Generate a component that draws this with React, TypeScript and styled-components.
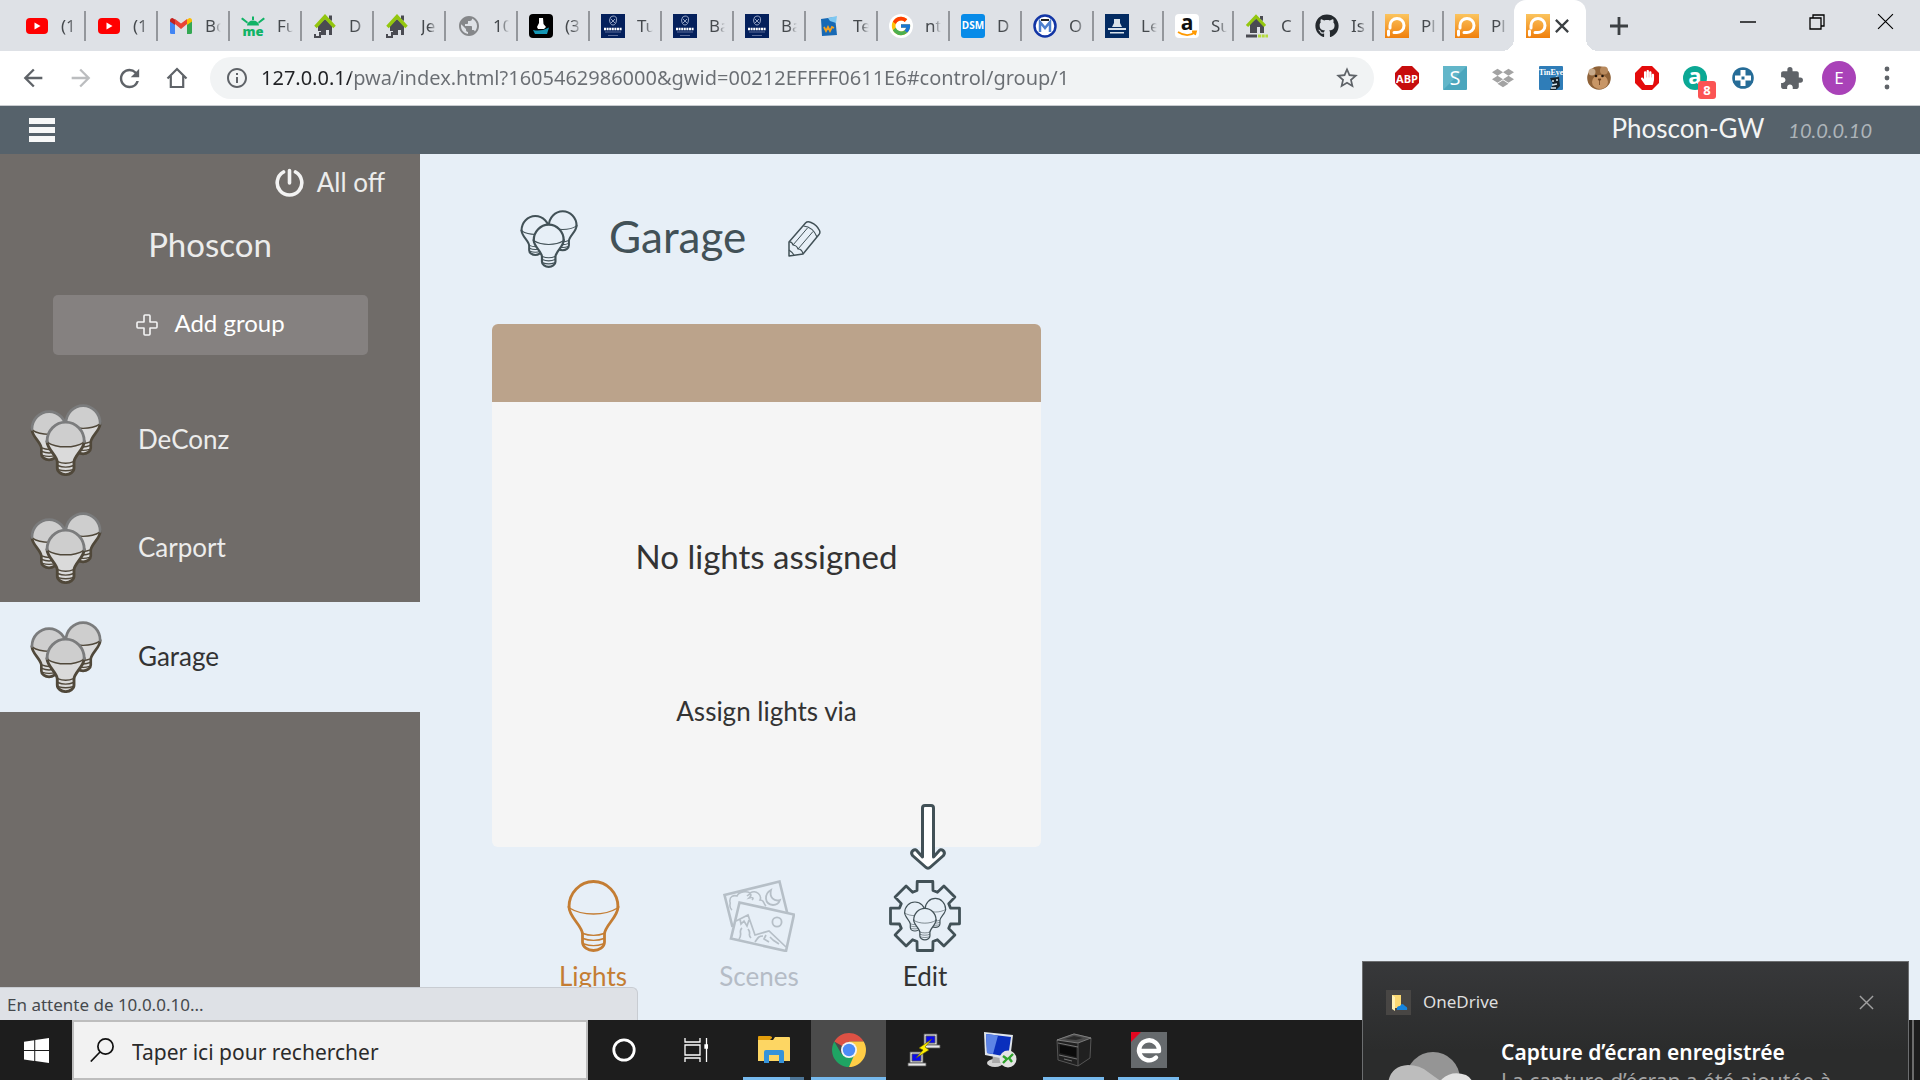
import React from "react";
import styled, { createGlobalStyle, css } from "styled-components";
import { FcGoogle } from "react-icons/fc";
import { FaGithub, FaDropbox, FaHandPaper } from "react-icons/fa";
import { MdExtension, MdStarBorder, MdInfoOutline, MdRefresh, MdArrowBack, MdArrowForward, MdPublic } from "react-icons/md";

const uiFont = `"Noto Sans", "Open Sans", sans-serif`;
const appFont = `Lato, "Open Sans", sans-serif`;

const color = {
  strip: "#dee1e6",
  chromeIcon: "#5f6368",
  header: "#56626b",
  sidebar: "#706c69",
  page: "#e7eff7",
  ink: "#425157",
  text: "#333333",
  orange: "#c47d33",
};

const GlobalStyle = createGlobalStyle`
  *, *::before, *::after { box-sizing: border-box; }
  body { margin: 0; overflow: hidden; }
  button { border: 0; padding: 0; margin: 0; background: none; color: inherit; font: inherit; cursor: pointer; }
  h1, h2, p, ul { margin: 0; padding: 0; font-weight: 400; }
  ul { list-style: none; }
  svg { display: block; flex: none; }
`;

const Screen = styled.div`
  position: relative;
  display: flex;
  flex-direction: column;
  height: 100vh;
  overflow: hidden;
  font-family: ${uiFont};
`;

/* ---------- browser tabs ---------- */

const TabStrip = styled.header`
  display: flex;
  height: 51px;
  padding-left: 14px;
  background: ${color.strip};
`;

const TabList = styled.div`
  display: flex;
`;

const Tab = styled.button<{ $narrow?: boolean }>`
  display: flex;
  align-items: center;
  gap: 12px;
  width: ${(p) => (p.$narrow ? 70 : 72)}px;
  height: 51px;
  padding-left: 11px;
  text-align: left;
  background: linear-gradient(#94979c, #94979c) right 11px / 2px 30px no-repeat;
  &:nth-last-child(2) { background: none; }
`;

const TabTitle = styled.span`
  width: 16px;
  overflow: hidden;
  white-space: nowrap;
  font-size: 17px;
  line-height: 24px;
  color: #45494d;
  mask-image: linear-gradient(to right, #000 50%, transparent);
`;

const ActiveTab = styled.div`
  position: relative;
  display: flex;
  align-items: center;
  gap: 5px;
  width: 72px;
  height: 51px;
  padding-left: 12px;
  background: #fff;
  border-radius: 12px 12px 0 0;
  &::before, &::after {
    content: "";
    position: absolute;
    bottom: 0;
    width: 12px;
    height: 12px;
  }
  &::before { right: 100%; background: radial-gradient(circle at 0 0, transparent 12px, #fff 12px); }
  &::after { left: 100%; background: radial-gradient(circle at 100% 0, transparent 12px, #fff 12px); }
`;

const TabAction = styled.button`
  display: grid;
  place-items: center;
  color: #3c4043;
`;

const NewTab = styled(TabAction)`
  width: 32px;
  margin-left: 17px;
`;

const WindowControls = styled.div`
  display: flex;
  align-items: flex-start;
  margin-left: auto;
`;

const WindowButton = styled.button`
  display: grid;
  place-items: center;
  width: 69px;
  height: 43px;
`;

/* ---------- browser toolbar ---------- */

const Toolbar = styled.div`
  display: flex;
  align-items: center;
  height: 55px;
  padding: 0 9px 0 9px;
  background: #fff;
  border-bottom: 1px solid #c9ccd0;
  color: ${color.chromeIcon};
`;

const ToolButton = styled.button<{ $faded?: boolean }>`
  position: relative;
  display: grid;
  place-items: center;
  width: 48px;
  height: 42px;
  opacity: ${(p) => (p.$faded ? 0.42 : 1)};
`;

const Omnibox = styled.label`
  display: flex;
  flex: 1;
  align-items: center;
  gap: 12px;
  height: 42px;
  margin: 0 9px;
  padding: 0 14px 0 15px;
  border-radius: 21px;
  background: #f1f3f4;
`;

/* The host part of the address is darker than the rest of it. */
const Address = styled.input`
  flex: 1;
  min-width: 0;
  border: 0;
  padding: 0;
  outline: 0;
  font: 20px/28px ${uiFont};
  color: #5f6368;
  background: linear-gradient(to right, #202124 90px, #6a6e73 90px);
  background-clip: text;
  -webkit-background-clip: text;
  -webkit-text-fill-color: transparent;
`;

const Badge = styled.span`
  position: absolute;
  right: 3px;
  bottom: 0;
  width: 18px;
  height: 18px;
  border-radius: 3px;
  background: #fb5454;
  color: #fff;
  font: 700 13px/18px ${uiFont};
  text-align: center;
`;

const Avatar = styled.span`
  width: 34px;
  height: 34px;
  border-radius: 50%;
  background: #a942b8;
  color: #fff;
  font: 17px/34px ${uiFont};
  text-align: center;
`;

/* ---------- gateway application ---------- */

const Gateway = styled.div`
  position: relative;
  display: flex;
  flex: 1;
  flex-direction: column;
  min-height: 0;
  overflow: hidden;
  font-family: ${appFont};
  background: ${color.page};
`;

const GatewayHeader = styled.header`
  display: flex;
  flex: none;
  align-items: center;
  justify-content: space-between;
  height: 48px;
  padding: 0 48px 0 29px;
  background: ${color.header};
`;

const MenuButton = styled.button`
  display: flex;
  flex-direction: column;
  gap: 3px;
  width: 26px;
  &::before, &::after, & > i {
    content: "";
    display: block;
    width: 100%;
    height: 6px;
    background: #f7f8f8;
  }
`;

const GatewayName = styled.div`
  display: flex;
  align-items: baseline;
  gap: 24px;
  padding-bottom: 2px;
  font-size: 26px;
  line-height: 32px;
  color: #f3f4f4;
`;

const GatewayAddress = styled.em`
  font-size: 20px;
  color: #adb4b9;
`;

const GatewayBody = styled.div`
  display: flex;
  flex: 1;
  min-height: 0;
`;

const Sidebar = styled.aside`
  flex: none;
  width: 420px;
  padding-top: 12px;
  background: ${color.sidebar};
  color: #ececec;
`;

const AllOff = styled.button`
  display: flex;
  align-items: center;
  gap: 13px;
  margin: 0 35px 0 auto;
  font-size: 26px;
  line-height: 32px;
`;

const SideTitle = styled.h2`
  margin: 26px 0 31px;
  font-size: 33px;
  line-height: 40px;
  text-align: center;
`;

const AddGroup = styled.button`
  display: flex;
  align-items: center;
  justify-content: center;
  gap: 16px;
  width: 315px;
  height: 60px;
  margin: 0 52px 31px 53px;
  border-radius: 5px;
  background: #858180;
  color: #fff;
  font-size: 24px;
  line-height: 32px;
  & > span { padding-bottom: 4px; }
`;

const GroupItem = styled.button<{ $active?: boolean }>`
  display: flex;
  align-items: center;
  gap: 36px;
  width: 100%;
  height: 108px;
  padding-left: 30px;
  font-size: 26px;
  line-height: 32px;
  & > span { padding-bottom: 3px; }
  ${(p) =>
    p.$active &&
    css`
      height: 110px;
      background: ${color.page};
      color: ${color.text};
    `}
`;

const Main = styled.main`
  flex: 1;
  min-width: 0;
  padding: 0 72px;
`;

const TitleRow = styled.div`
  display: flex;
  align-items: center;
  height: 170px;
  padding-left: 28px;
  color: ${color.ink};
`;

const GroupTitle = styled.h1`
  margin: 0 42px 0 31px;
  padding-bottom: 7px;
  font-size: 44px;
  line-height: 52px;
`;

const Column = styled.div`
  max-width: 549px;
`;

const Card = styled.section`
  overflow: hidden;
  border-radius: 6px;
  background: #f5f5f5;
  color: ${color.text};
  text-align: center;
`;

const CardHeader = styled.div`
  height: 78px;
  background: #bba38b;
`;

const CardBody = styled.div`
  display: flex;
  flex-direction: column;
  gap: 119px;
  padding: 134px 0 120px;
`;

const EmptyTitle = styled.p`
  font-size: 33px;
  line-height: 40px;
`;

const EmptyHint = styled.p`
  font-size: 26px;
  line-height: 32px;
`;

const ViewNav = styled.nav`
  display: grid;
  grid-template-columns: repeat(3, 166px);
  margin: 33px 0 0 18px;
`;

const ViewButton = styled.button<{ $tone: string }>`
  position: relative;
  display: flex;
  flex-direction: column;
  align-items: center;
  gap: 8px;
  font-size: 26px;
  line-height: 32px;
  color: ${(p) => p.$tone};
`;

const Pointer = styled.span`
  position: absolute;
  bottom: calc(100% + 10px);
  left: 50%;
  margin-left: -15px;
`;

const StatusBubble = styled.div`
  position: absolute;
  left: 0;
  bottom: 0;
  width: 638px;
  height: 33px;
  padding-left: 7px;
  border: solid #c8ccd2;
  border-width: 1px 1px 0 0;
  border-top-right-radius: 6px;
  background: ${color.strip};
  color: #45494d;
  font: 17px/34px ${uiFont};
`;

/* ---------- taskbar ---------- */

const Taskbar = styled.footer`
  display: flex;
  flex: none;
  height: 60px;
  background: #1d1d1d;
  color: #fff;
`;

const StartButton = styled.button`
  display: grid;
  place-items: center;
  width: 72px;
`;

const SearchBox = styled.label`
  display: flex;
  align-items: center;
  gap: 18px;
  width: 516px;
  padding-left: 16px;
  border: 2px solid #bdbdbd;
  background: #f2f2f2;
  color: #1a1a1a;
`;

const SearchInput = styled.input`
  flex: 1;
  min-width: 0;
  border: 0;
  padding: 4px 0 0;
  outline: 0;
  background: none;
  font: 21px/28px ${uiFont};
  &::placeholder { color: #2b2b2b; opacity: 1; }
`;

const SystemButton = styled.button`
  display: grid;
  place-items: center;
  width: 72px;
`;

const TaskButtons = styled.div`
  display: flex;
  padding-left: 4px;
`;

const TaskButton = styled.button<{ $state?: "open" | "active" | "stack" }>`
  position: relative;
  display: grid;
  place-items: center;
  width: 75px;
  background: ${(p) => (p.$state === "active" ? "#4b4b4b" : "none")};
  &::after {
    content: "";
    position: absolute;
    right: ${(p) => (p.$state === "active" ? 0 : 7)}px;
    bottom: 0;
    left: ${(p) => (p.$state === "active" ? 0 : 7)}px;
    height: 3px;
    background: ${(p) =>
      p.$state === "stack"
        ? "linear-gradient(to right, #76b9ed 47px, #4d7596 47px)"
        : p.$state
        ? "#76b9ed"
        : "none"};
  }
`;

const ShowDesktop = styled.button`
  width: 8px;
  margin-left: auto;
  border-left: 2px solid #6b6b6b;
`;

/* ---------- notification ---------- */

const Toast = styled.aside`
  position: absolute;
  right: 11px;
  bottom: 0;
  width: 547px;
  height: 119px;
  overflow: hidden;
  border: 1px solid #6c6e70;
  border-width: 1px 1px 0;
  background: linear-gradient(#37383a, #2b2c2c 75%);
  color: #fff;
`;

const ToastHead = styled.div`
  display: flex;
  align-items: center;
  gap: 12px;
  padding: 28px 34px 0 23px;
  font-size: 17px;
  line-height: 22px;
  color: #dedede;
`;

const ToastApp = styled.span`
  padding-bottom: 2px;
`;

const ToastClose = styled.button`
  margin-left: auto;
  color: #a0a0a0;
`;

const ToastBody = styled.div`
  display: flex;
  gap: 25px;
  padding: 37px 0 0 25px;
`;

const ToastTitle = styled.p`
  font-size: 21px;
  font-weight: 600;
  line-height: 30px;
`;

const ToastText = styled.p`
  font-size: 21px;
  line-height: 28px;
  color: #a3a3a3;
`;

const ToastCopy = styled.div`
  margin-top: -15px;
`;

/* ---------- drawings ---------- */

type BulbProps = { w: number; filled?: boolean; fill?: string };

function Bulb({ w, filled, fill = "none" }: BulbProps) {
  const dome = filled ? "#7b7c7d" : "currentColor";
  const base = filled ? "#50483a" : "currentColor";
  return (
    <g fill="none" strokeLinecap="round" strokeLinejoin="round">
      <path
        d="M2 27C2 37 15.5 46 15.5 54V62C15.5 67 21 70.5 26.5 70.5S37.5 67 37.5 62V54C37.5 46 51 37 51 27Z"
        fill={filled ? "#dadada" : fill}
      />
      <path d="M2 27A24.5 25 0 0 1 51 27C38 36 15 36 2 27Z" fill={filled ? "#cecece" : fill} />
      <path
        d="M2 27C2 37 15.5 46 15.5 54V62C15.5 67 21 70.5 26.5 70.5S37.5 67 37.5 62V54C37.5 46 51 37 51 27"
        stroke={base}
        strokeWidth={w}
      />
      <path
        d="M2.5 28C15 36 38 36 50.5 28M16 53.5C22 56 31 56 37 53.5M16 58.5C22 61 31 61 37 58.5M17 64C23 66 30 66 36 64"
        stroke={base}
        strokeWidth={w * 0.5}
      />
      <path d="M2 27A24.5 25.5 0 0 1 51 27" stroke={dome} strokeWidth={w} />
    </g>
  );
}

function BulbTrio({ w, filled, fill }: BulbProps) {
  return (
    <>
      <g transform="translate(0.5 6.5) scale(.7)"><Bulb w={w} filled={filled} fill={fill} /></g>
      <g transform="translate(34.5 0.5) scale(.7)"><Bulb w={w} filled={filled} fill={fill} /></g>
      <g transform="translate(15.5 17) scale(.76)"><Bulb w={w} filled={filled} fill={fill} /></g>
    </>
  );
}

function gearPath() {
  const tooth = [[-8, -25.5], [-7.8, -34.5], [7.8, -34.5], [8, -25.5]];
  const pts: string[] = [];
  for (let k = 0; k < 8; k++) {
    const a = (k * Math.PI) / 4;
    for (const [x, y] of tooth) {
      pts.push(`${(36 + x * Math.cos(a) - y * Math.sin(a)).toFixed(1)} ${(36 + x * Math.sin(a) + y * Math.cos(a)).toFixed(1)}`);
    }
  }
  return `M${pts.join("L")}Z`;
}

const EditIcon = () => (
  <svg width="72" height="72" viewBox="0 0 72 72" color={color.ink}>
    <path d={gearPath()} fill="none" stroke="currentColor" strokeWidth="2.8" strokeLinejoin="round" />
    <g transform="translate(14.5 17.5) scale(.6)"><BulbTrio w={2.8} fill={color.page} /></g>
  </svg>
);

const LightIcon = () => (
  <svg width="53" height="72" viewBox="0 0 53 72"><Bulb w={2.8} /></svg>
);

const ScenesIcon = () => (
  <svg width="72" height="72" viewBox="0 0 72 72" fill="none" stroke="#b6bfc7" strokeWidth="2.6" strokeLinejoin="miter">
    <path d="M9.5 47L1.5 15L56.5 1.5L64.5 34" />
    <path d="M9 30C5 27 8 24 7 22C6 16 11 15 14 16C16 11 24 11 27 13C34 9 39 16 37 20C42 20 40 24 43 26M24 16C27 13 30 14 26 18C30 17 31 18 29 20" strokeWidth="1.6" />
    <path d="M48 10C41 14 41 24 50 25C53 25 56 23 57 20C51 22 46 17 48 10Z" strokeWidth="1.8" />
    <path d="M16.500 22.500L71 34.500L63 71L8 58.500Z" fill={color.page} />
    <path d="M13 41L17 39L25 35L32 55L46 51L63 67M17 39L18 44L21 41L24 46L26 40M19 48C15 51 20 54 16 59M25 49C29 54 24 54 28 58M32 62C35 58 35 56 40 56M43 55L41 59L46 62M47 57L51 61M50 60L56 64" strokeWidth="1.7" />
    <circle cx="54" cy="42" r="4.600" strokeWidth="1.800" />
  </svg>
);

const ArrowDown = () => (
  <svg width="36" height="66" viewBox="0 0 36 66" fill="#fff" stroke={color.ink} strokeWidth="3" strokeLinejoin="round">
    <path d="M12.500 4Q12.500 1.500 15 1.500H21Q23.500 1.500 23.500 4V53L28.500 47.500Q30.500 44.500 33 46.500T33.500 51.500L20.500 63Q18 65.500 15.500 63L2.500 51.500Q.5 48.500 3 46.500T7.500 47.500L12.500 53Z" />
  </svg>
);

const PencilIcon = () => (
  <svg width="33" height="36" viewBox="0 0 33 36" fill="none" stroke={color.ink} strokeWidth="1.500" strokeLinejoin="round">
    <path d="M1 21L17.500 2Q19.500 0 23 1.500Q29 4 31.500 9.500Q32.500 12 31 13.500L15 33L1 35Z" />
    <path d="M15.500 5Q25 6 29 16M1 21Q4 20.500 5 24Q9 24.500 10 28Q14 28 15 33M1 29Q4 31 6 34" strokeWidth="1.200" />
    <path d="M5 24L19.500 7M10 28L25 10.500" strokeWidth="1" />
  </svg>
);

const PowerIcon = () => (
  <svg width="29" height="29" viewBox="0 0 29 29" fill="none" stroke="#f3f3f3" strokeWidth="3.600" strokeLinecap="round">
    <path d="M8.500 4A12.300 12.300 0 1 0 20.500 4M14.500 2.500V15" />
  </svg>
);

const PlusOutline = () => (
  <svg width="22" height="22" viewBox="0 0 22 22" fill="none" stroke="#f4f4f4" strokeWidth="1.600" strokeLinejoin="round">
    <path d="M8 2Q8 1 9 1H13Q14 1 14 2V8H20Q21 8 21 9V13Q21 14 20 14H14V20Q14 21 13 21H9Q8 21 8 20V14H2Q1 14 1 13V9Q1 8 2 8H8Z" />
  </svg>
);

const Svg24 = ({ children }: { children: React.ReactNode }) => (
  <svg width="24" height="24" viewBox="0 0 24 24">{children}</svg>
);

const fav: Record<string, React.ReactNode> = {
  youtube: <Svg24><rect x="1" y="4" width="22" height="16" rx="4" fill="#f00" /><path d="M9.500 8.500L15.500 12L9.500 15.500Z" fill="#fff" /></Svg24>,
  gmail: (
    <Svg24>
      <path d="M1 6V19Q1 20 2.500 20H6V10Z" fill="#4285f4" /><path d="M18 10V20H21.500Q23 20 23 18.500V6Z" fill="#34a853" />
      <path d="M6 10V5L12 9.500L18 5V10L12 15Z" fill="#ea4335" /><path d="M1 6.500Q1 4 3.500 4L6 5.500V11L1 7.500Z" fill="#c5221f" /><path d="M23 6.500Q23 4 20.500 4L18 5.500V11L23 7.500Z" fill="#fbbc04" />
    </Svg24>
  ),
  me: (
    <Svg24>
      <path d="M6 11.500A6 5 0 0 1 18 11.500ZM11 2.500H13V6H11ZM0 5L1.500 3.500L7 8L6 9.500ZM24 5L22.500 3.500L17 8L18 9.500Z" fill="#11b366" />
      <text x="12" y="21.500" fontFamily="Open Sans, sans-serif" fontWeight="800" fontSize="13" textAnchor="middle" fill="#11b366">me</text>
    </Svg24>
  ),
  house: (
    <Svg24>
      <path d="M5 11L12 5L19 11V21H16V16H13V21H8V17H5ZM16 1.500H19V7L16 5Z" fill="#4a4b52" /><path d="M2.500 13L12 2.500L21.500 13" stroke="#93c60e" strokeWidth="3.400" fill="none" /><path d="M2 20V23H7V18" stroke="#4a4b52" strokeWidth="2" fill="none" />
    </Svg24>
  ),
  globe: <MdPublic size={24} color="#85878a" />,
  foot: <Svg24><rect width="24" height="24" rx="4" fill="#000" /><path d="M10 4H14L14.500 10L17 13L15 15H9L8 13L10 9Z" fill="#fff" /><path d="M4 16Q12 18 20 13.500L18 20H6Z" fill="#1497b5" /></Svg24>,
  leonidas: (
    <Svg24>
      <rect width="24" height="24" fill="#04205c" /><path d="M12 2Q16 2 15.500 6Q15 11 12 11T8.500 6Q9 2 12 2ZM10 5L14 9M14 5L10 9" stroke="#b8c3dc" strokeWidth=".8" fill="none" /><path d="M3 15H21" stroke="#fff" strokeWidth="2.600" strokeDasharray="2 .6" /><path d="M4 18H20M7 21.500H17" stroke="#65759f" strokeWidth=".9" />
    </Svg24>
  ),
  vaf: <Svg24><path d="M4 5L18 3L20 21L5 22Z" fill="#1769b5" /><path d="M11 4L20 2L19 9L13 7Z" fill="#7dc7f1" /><path d="M7 13L9 17L11 13L13 17L15 13L17 14" stroke="#f6a11e" strokeWidth="1.800" fill="none" /></Svg24>,
  google: <Svg24><circle cx="12" cy="12" r="12" fill="#fff" /><FcGoogle x={1} y={1} size={22} /></Svg24>,
  dsm: <Svg24><rect width="24" height="24" rx="3" fill="#088be8" /><text x="12" y="15" fontFamily="Open Sans, sans-serif" fontWeight="700" fontSize="10" textAnchor="middle" fill="#fff">DSM</text></Svg24>,
  medal: <Svg24><circle cx="12" cy="12" r="10.500" fill="#fff" stroke="#1235a5" strokeWidth="2.500" /><path d="M7 18V8L12 14L17 8V18" fill="none" stroke="#4c7fce" strokeWidth="2.500" /><path d="M8 6H16" stroke="#222" strokeWidth="2" /></Svg24>,
  crest: <Svg24><rect width="24" height="24" fill="#032b62" /><path d="M9 5H15V9L17 13H7L9 9ZM3 14H21V16H3ZM5 18H19V19.500H5Z" fill="#d8e2ea" /></Svg24>,
  amazon: (
    <Svg24>
      <rect width="24" height="24" rx="4" fill="#fff" /><text x="12" y="16" fontFamily="Open Sans, sans-serif" fontWeight="700" fontSize="21" textAnchor="middle" fill="#111">a</text><path d="M3 18Q12 24 20 18.500M17 17.500H21L20 21" stroke="#f90" strokeWidth="1.800" fill="none" />
    </Svg24>
  ),
  jeedom: (
    <Svg24>
      <path d="M5 10L12 4L19 10V19H15V13H12V19H5ZM15 2H18V7L15 5Z" fill="#4a4b52" /><path d="M2 12L11 2.500L20 12" stroke="#93c60e" strokeWidth="3.200" fill="none" /><path d="M1 22H12" stroke="#4a4b52" strokeWidth="3" /><path d="M13 22H23" stroke="#b5dc3c" strokeWidth="3" strokeDasharray="3 .7" />
    </Svg24>
  ),
  github: <FaGithub size={24} color="#24292e" />,
  phoscon: (
    <Svg24>
      <defs><linearGradient id="ph" x2="0" y2="1"><stop stopColor="#fbc45e" /><stop offset="1" stopColor="#f07f0b" /></linearGradient></defs>
      <rect width="24" height="24" fill="url(#ph)" /><path d="M3.500 17V21M5 14V11.500A7 7 0 1 1 12 18.500H9" fill="none" stroke="#fff" strokeWidth="3" strokeLinecap="round" />
    </Svg24>
  ),
};

const tabs: [string, string][] = [
  ["youtube", "(1"], ["youtube", "(1"], ["gmail", "Bo"], ["me", "Fu"], ["house", "D"], ["house", "Je"], ["globe", "10"],
  ["foot", "(3"], ["leonidas", "Tu"], ["leonidas", "Ba"], ["leonidas", "Ba"], ["vaf", "Te"], ["google", "nt"], ["dsm", "D"],
  ["medal", "O"], ["crest", "Le"], ["amazon", "Su"], ["jeedom", "C"], ["github", "Is"], ["phoscon", "Pl"], ["phoscon", "Pl"],
];

const octagon = "M7 0H17L24 7V17L17 24H7L0 17V7Z";

const extensions: { name: string; icon: React.ReactNode; badge?: string }[] = [
  { name: "Adblock Plus", icon: <Svg24><path d={octagon} fill="#c70d0d" /><text x="12" y="16.500" fontFamily="Open Sans, sans-serif" fontWeight="700" fontSize="11" textAnchor="middle" fill="#fff">ABP</text></Svg24> },
  { name: "S", icon: <Svg24><rect width="24" height="24" rx="1" fill="#4ba6bd" /><path d="M0 0H24L0 24Z" fill="#62b6c9" /><text x="12" y="19" fontFamily="Open Sans, sans-serif" fontSize="20" textAnchor="middle" fill="#fff">S</text></Svg24> },
  { name: "Dropbox", icon: <FaDropbox size={22} color="#a3a3a3" /> },
  { name: "TinEye", icon: <Svg24><rect width="24" height="24" rx="1" fill="#2f7db8" /><text x="12" y="9" fontFamily="Liberation Serif, serif" fontWeight="700" fontSize="8" textAnchor="middle" fill="#fff">TinEye</text><path d="M11 12L20 11L21 20L17 24H11L14 18Z" fill="#16232d" /><path d="M13 15H15M17 14H19M13 19L18 18M12 22H17" stroke="#dceaf2" strokeWidth="1.600" /></Svg24> },
  { name: "Cookies", icon: <Svg24><circle cx="12" cy="12" r="11.800" fill="#8f6238" /><circle cx="5" cy="6" r="3.500" fill="#c7a98a" /><circle cx="17" cy="4.500" r="4" fill="#b88a5e" /><ellipse cx="13" cy="16" rx="8" ry="7" fill="#c89666" /><circle cx="9" cy="10" r="1.300" fill="#1d120a" /><circle cx="15.500" cy="10" r="1.300" fill="#1d120a" /><path d="M11 13H14L12.500 15ZM12.500 15V19" stroke="#6b3f1d" fill="#6b3f1d" strokeWidth=".8" /></Svg24> },
  { name: "AdBlock", icon: <Svg24><path d={octagon} fill="#e40b0b" /><FaHandPaper x={5} y={4} size={15} color="#fff" /></Svg24> },
  { name: "a", badge: "8", icon: <Svg24><circle cx="12" cy="12" r="12" fill="#0ba894" /><text x="12" y="18" fontFamily="Open Sans, sans-serif" fontWeight="700" fontSize="22" textAnchor="middle" fill="#fff">a</text></Svg24> },
  { name: "Plus", icon: <Svg24><circle cx="12" cy="12" r="10.800" fill="#266c97" /><path d="M9.500 4H14.500V9.500H20V14.500H14.500V20H9.500V14.500H4V9.500H9.500Z" fill="#fff" /><path d="M10.500 10.500H13.500V13.500H10.500Z" fill="#266c97" /></Svg24> },
];

const ChromeLogo = () => (
  <svg width="34" height="34" viewBox="0 0 34 34">
    <path d="M17 17L2.300 8.500A17 17 0 0 1 31.700 8.500H17Z" fill="#dd5144" />
    <path d="M17 17L24.400 21.200L17 34A17 17 0 0 1 2.300 8.500L9.600 21.200Z" fill="#1fa463" />
    <path d="M31.700 8.500H17V17H24.400L17 34A17 17 0 0 0 31.700 8.500Z" fill="#ffcd46" />
    <circle cx="17" cy="17" r="8" fill="#f4f4f4" /><circle cx="17" cy="17" r="6.200" fill="#4c8bf5" />
  </svg>
);

const ExplorerIcon = () => (
  <svg width="32" height="30" viewBox="0 0 32 30">
    <path d="M0 5H15L17 2H31Q32 2 32 3V26H0Z" fill="#fdd663" /><path d="M0 5H12L14 3V2L12 1H1Q0 1 0 2Z" fill="#e39e0c" />
    <path d="M6 28V17Q6 15 8 15H24Q26 15 26 17V28H21V20H11V28Z" fill="#3693da" />
  </svg>
);

const PuttyIcon = () => (
  <svg width="34" height="34" viewBox="0 0 34 34">
    <g stroke="#555" strokeWidth=".8"><path d="M17 1H30V12H17Z" fill="#d6d6d6" /><path d="M19 3H28V10H19Z" fill="#0a0aeb" /><path d="M17 12H33V15H17Z" fill="#e8e8e8" /></g>
    <g stroke="#555" strokeWidth=".8"><path d="M3 19H16V30H3Z" fill="#d6d6d6" /><path d="M5 21H14V28H5Z" fill="#0a0aeb" /><path d="M1 30H19V33H1Z" fill="#e8e8e8" /></g>
    <path d="M25 6L12 15L16 17L9 25L22 17L18 14Z" fill="#ffed00" stroke="#5c5700" strokeWidth=".6" />
  </svg>
);

const RemoteIcon = () => (
  <svg width="36" height="36" viewBox="0 0 36 36">
    <ellipse cx="14" cy="31" rx="8" ry="4" fill="#d3d3d3" /><path d="M12 23H19L20 31H11Z" fill="#aaa" />
    <path d="M3 0L32 3L29 28L4 23Z" fill="#dfe4ea" /><path d="M5 2L30 5L27 25L6 21Z" fill="#0a2fbd" /><path d="M5 2L17 3.500L12 22L6 21Z" fill="#5d84e6" />
    <circle cx="27" cy="27" r="8.500" fill="#e3e3e3" /><path d="M22 24L26 27L22 31M32 22L28 26L31 30" stroke="#2ea32a" strokeWidth="2.400" fill="none" />
  </svg>
);

const PrinterIcon = () => (
  <svg width="36" height="34" viewBox="0 0 36 34">
    <path d="M1 7L18 1L35 5L34 25L22 33L2 27Z" fill="#202020" stroke="#565656" /><path d="M1 7L18 1L35 5L22 10Z" fill="#4a4a4a" stroke="#8a8a8a" strokeWidth=".8" /><path d="M9 6L18 3L27 5L20 7Z" fill="#2a2a2a" /><path d="M22 10V33" stroke="#5b5b5b" /><path d="M4 12L20 15V24L4 20Z" fill="#0a0a0a" /><path d="M2 10L22 14M3 22L21 26M8 26L16 28" stroke="#8a8a8a" strokeWidth=".8" />
  </svg>
);

const EIcon = () => (
  <svg width="36" height="36" viewBox="0 0 36 36">
    <rect width="36" height="36" fill="#666a6d" /><path d="M0 0H10L0 10Z" fill="#e30620" /><path d="M10 19H28A10 10 0 1 0 25 25.500" fill="none" stroke="#fff" strokeWidth="4.400" strokeLinecap="round" strokeLinejoin="round" />
  </svg>
);

const Cross = ({ size, w }: { size: number; w: number }) => (
  <svg width={size} height={size} viewBox="0 0 16 16" stroke="currentColor" strokeWidth={w}><path d="M1 1L15 15M15 1L1 15" /></svg>
);

/* ---------- sections ---------- */

function BrowserChrome() {
  return (
    <>
      <TabStrip>
        <TabList>
          {tabs.map(([icon, title], i) => (
            <Tab key={i} $narrow={i > 14}>
              {fav[icon]}
              <TabTitle>{title}</TabTitle>
            </Tab>
          ))}
          <ActiveTab>
            {fav.phoscon}
            <TabAction aria-label="Close tab"><Cross size={14} w={2.6} /></TabAction>
          </ActiveTab>
        </TabList>
        <NewTab aria-label="New tab">
          <svg width="18" height="18" viewBox="0 0 18 18" stroke="currentColor" strokeWidth="2.800"><path d="M9 0V18M0 9H18" /></svg>
        </NewTab>
        <WindowControls>
          <WindowButton aria-label="Minimize"><svg width="16" height="16" viewBox="0 0 16 16"><path d="M0 8H16" stroke="#000" strokeWidth="1.400" /></svg></WindowButton>
          <WindowButton aria-label="Restore"><svg width="16" height="16" viewBox="0 0 16 16" fill="none" stroke="#000" strokeWidth="1.300"><path d="M1 4H12V15H1ZM4 4V1H15V12H12" /></svg></WindowButton>
          <WindowButton aria-label="Close"><Cross size={17} w={1.1} /></WindowButton>
        </WindowControls>
      </TabStrip>
      <Toolbar>
        <ToolButton aria-label="Back"><MdArrowBack size={28} /></ToolButton>
        <ToolButton aria-label="Forward" $faded><MdArrowForward size={28} /></ToolButton>
        <ToolButton aria-label="Reload"><MdRefresh size={29} /></ToolButton>
        <ToolButton aria-label="Home">
          <svg width="22" height="22" viewBox="0 0 22 22" fill="none" stroke="currentColor" strokeWidth="2.200"><path d="M1.500 11.500L11 2L20.500 11.500M4.800 9V20H17.200V9" /></svg>
        </ToolButton>
        <Omnibox>
          <MdInfoOutline size={24} />
          <Address aria-label="Address" defaultValue="127.0.0.1/pwa/index.html?1605462986000&gwid=00212EFFFF0611E6#control/group/1" />
          <MdStarBorder size={26} />
        </Omnibox>
        {extensions.map((e) => (
          <ToolButton key={e.name} aria-label={e.name}>
            {e.icon}
            {e.badge && <Badge>{e.badge}</Badge>}
          </ToolButton>
        ))}
        <ToolButton aria-label="Extensions"><MdExtension size={25} /></ToolButton>
        <ToolButton aria-label="Profile"><Avatar>E</Avatar></ToolButton>
        <ToolButton aria-label="Menu">
          <svg width="6" height="24" viewBox="0 0 6 24" fill="currentColor"><circle cx="3" cy="3" r="2.400" /><circle cx="3" cy="12" r="2.400" /><circle cx="3" cy="21" r="2.400" /></svg>
        </ToolButton>
      </Toolbar>
    </>
  );
}

const groups = ["DeConz", "Carport", "Garage"];

function GatewayApp() {
  return (
    <Gateway>
      <GatewayHeader>
        <MenuButton aria-label="Open menu"><i /></MenuButton>
        <GatewayName>Phoscon-GW <GatewayAddress>10.0.0.10</GatewayAddress></GatewayName>
      </GatewayHeader>
      <GatewayBody>
        <Sidebar>
          <AllOff><PowerIcon />All off</AllOff>
          <SideTitle>Phoscon</SideTitle>
          <AddGroup><PlusOutline /><span>Add group</span></AddGroup>
          <ul>
            {groups.map((name) => (
              <li key={name}>
                <GroupItem $active={name === "Garage"}>
                  <svg width="72" height="72" viewBox="0 0 72 72"><BulbTrio w={3.8} filled /></svg>
                  <span>{name}</span>
                </GroupItem>
              </li>
            ))}
          </ul>
        </Sidebar>
        <Main>
          <TitleRow>
            <svg width="58" height="58" viewBox="0 0 72 72"><BulbTrio w={3.6} fill={color.page} /></svg>
            <GroupTitle>Garage</GroupTitle>
            <button aria-label="Rename group"><PencilIcon /></button>
          </TitleRow>
          <Column>
            <Card>
              <CardHeader />
              <CardBody>
                <EmptyTitle>No lights assigned</EmptyTitle>
                <EmptyHint>Assign lights via</EmptyHint>
              </CardBody>
            </Card>
            <ViewNav>
              <ViewButton $tone={color.orange}><LightIcon />Lights</ViewButton>
              <ViewButton $tone="#b5bcc6"><ScenesIcon />Scenes</ViewButton>
              <ViewButton $tone={color.text}>
                <Pointer><ArrowDown /></Pointer>
                <EditIcon />Edit
              </ViewButton>
            </ViewNav>
          </Column>
        </Main>
      </GatewayBody>
      <StatusBubble>En attente de 10.0.0.10...</StatusBubble>
    </Gateway>
  );
}

function WindowsTaskbar() {
  return (
    <Taskbar>
      <StartButton aria-label="Start">
        <svg width="25" height="25" viewBox="0 0 24 24" fill="#fff"><path d="M0 3.500L9.800 2.100V11.500H0ZM10.800 2L24 0V11.500H10.800ZM0 12.500H9.800V22L0 20.600ZM10.800 12.500H24V24L10.800 22.100Z" /></svg>
      </StartButton>
      <SearchBox>
        <svg width="24" height="24" viewBox="0 0 24 24" fill="none" stroke="#111" strokeWidth="1.700"><circle cx="15.500" cy="8.500" r="7.600" /><path d="M10 14L.8 23.500" /></svg>
        <SearchInput type="search" aria-label="Search" placeholder="Taper ici pour rechercher" />
      </SearchBox>
      <SystemButton aria-label="Cortana"><svg width="24" height="24" viewBox="0 0 24 24"><circle cx="12" cy="12" r="10.200" fill="none" stroke="#fff" strokeWidth="2.800" /></svg></SystemButton>
      <SystemButton aria-label="Task view">
        <svg width="24" height="24" viewBox="0 0 24 24" fill="none" stroke="#fff" strokeWidth="1.300"><path d="M1 0V4H16V0M1 7H16V17H1ZM1 24V20H16V24M22.500 0V24" /><path d="M21 7H24V10H21Z" fill="#fff" /></svg>
      </SystemButton>
      <TaskButtons>
        <TaskButton aria-label="File Explorer" $state="stack"><ExplorerIcon /></TaskButton>
        <TaskButton aria-label="Chrome" $state="active"><ChromeLogo /></TaskButton>
        <TaskButton aria-label="PuTTY"><PuttyIcon /></TaskButton>
        <TaskButton aria-label="Remote Desktop"><RemoteIcon /></TaskButton>
        <TaskButton aria-label="Printer" $state="open"><PrinterIcon /></TaskButton>
        <TaskButton aria-label="e" $state="open"><EIcon /></TaskButton>
      </TaskButtons>
      <ShowDesktop aria-label="Show desktop" />
    </Taskbar>
  );
}

function Notification() {
  return (
    <Toast>
      <ToastHead>
        <svg width="25" height="25" viewBox="0 0 25 25"><rect width="25" height="25" fill="#484644" /><path d="M6 5H15V18H8L6 16Z" fill="#fbd872" /><path d="M6 5L9 7V21L6 19Z" fill="#fff0b3" /><path d="M11 20Q10 16 14 16Q16 12 19 16Q22 17 21 20Z" fill="#1583dc" /></svg>
        <ToastApp>OneDrive</ToastApp>
        <ToastClose aria-label="Dismiss"><Cross size={15} w={1.5} /></ToastClose>
      </ToastHead>
      <ToastBody>
        <svg width="88" height="60" viewBox="0 0 88 60">
          <circle cx="45" cy="27" r="27" fill="#959595" />
          <path d="M0 32Q2 14 20 13Q32 13 40 20L68 40L50 60H0Z" fill="#bdbdbd" /><path d="M30 60L54 27Q64 18 78 23Q86 27 87 40V60Z" fill="#e2e2e2" />
        </svg>
        <ToastCopy>
          <ToastTitle>Capture d’écran enregistrée</ToastTitle>
          <ToastText>La capture d’écran a été ajoutée à</ToastText>
        </ToastCopy>
      </ToastBody>
    </Toast>
  );
}

export default function App() {
  return (
    <Screen>
      <GlobalStyle />
      <BrowserChrome />
      <GatewayApp />
      <WindowsTaskbar />
      <Notification />
    </Screen>
  );
}
